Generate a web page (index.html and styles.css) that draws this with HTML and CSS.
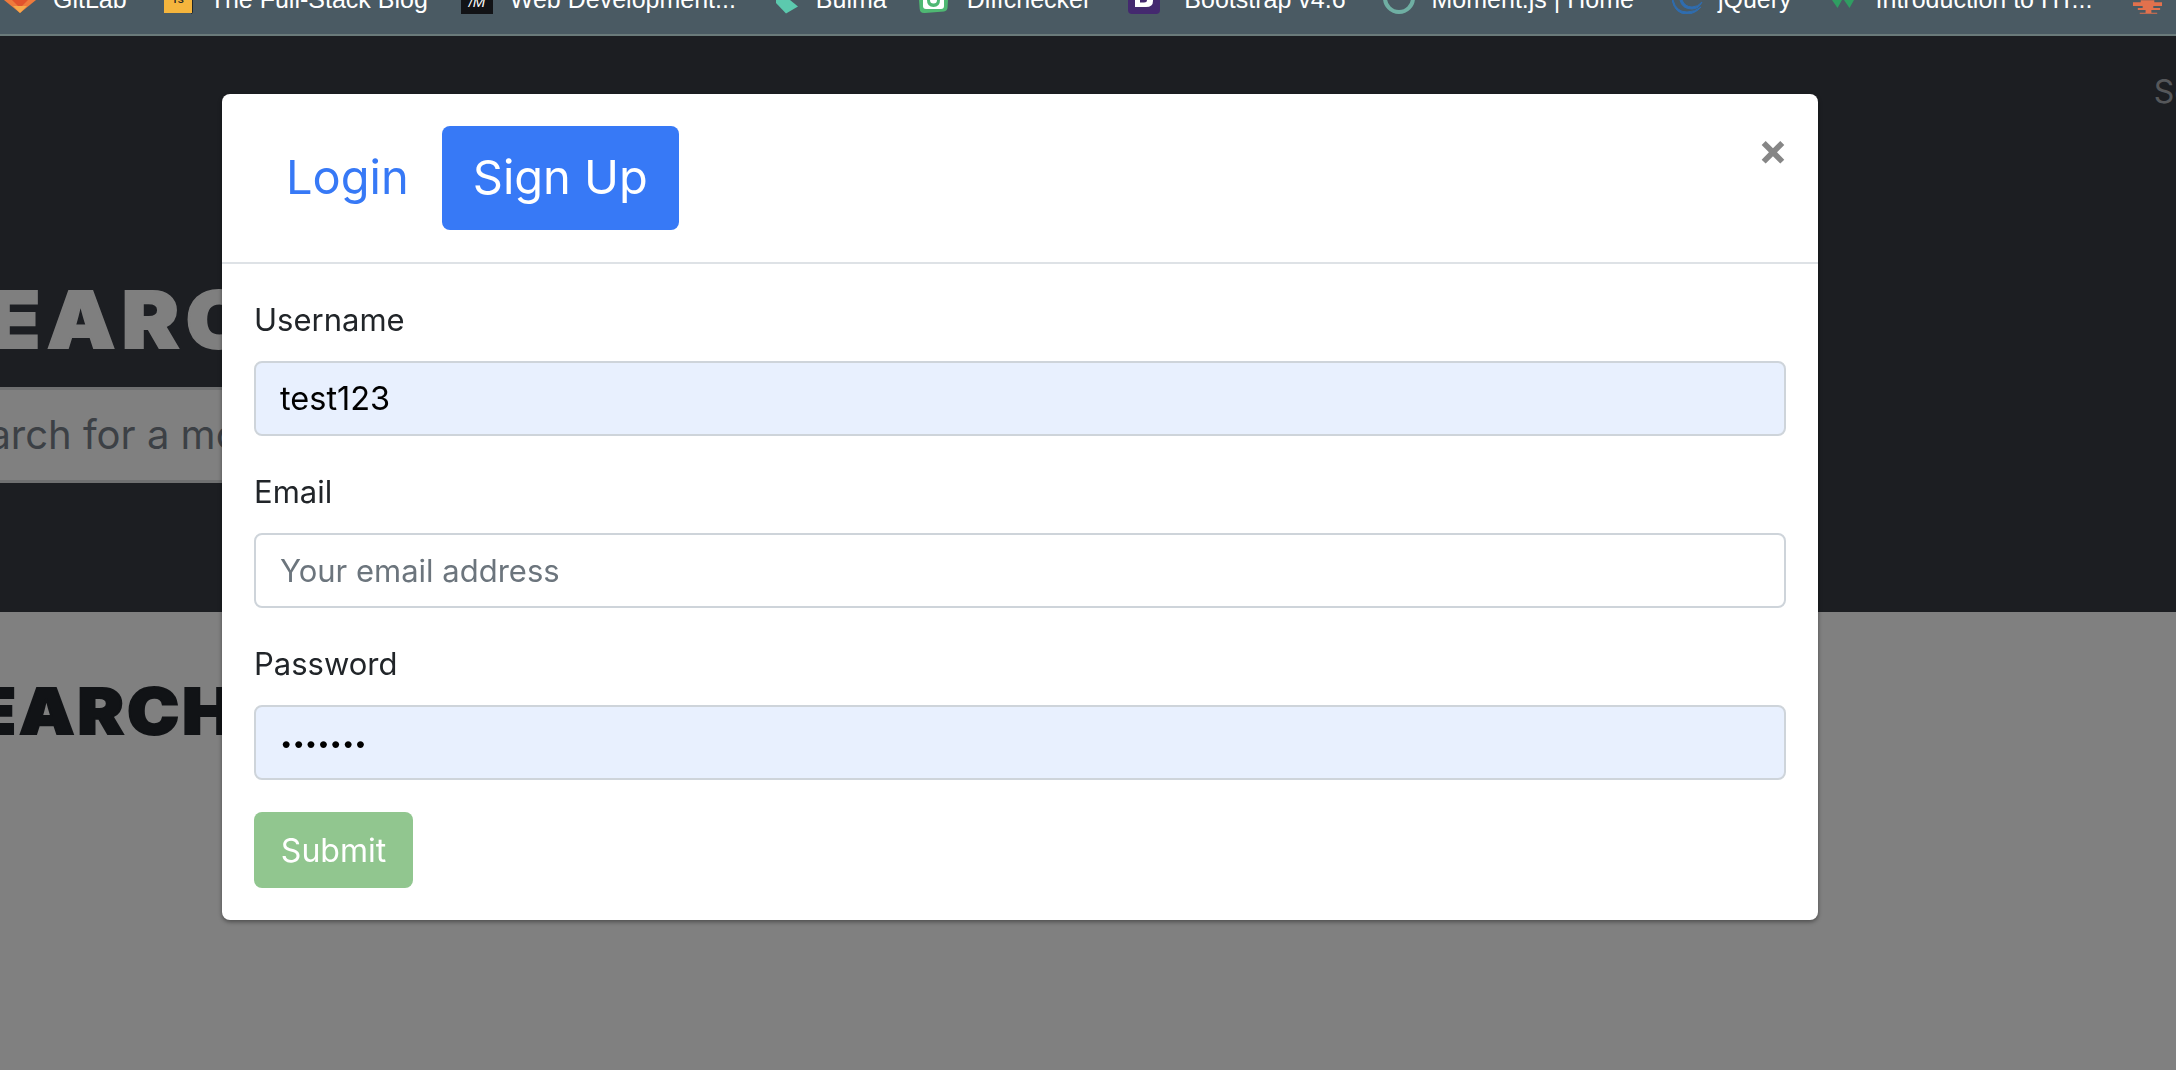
FILE: index.html

```html
<!DOCTYPE html>
<html lang="en">
<head>
  <meta charset="UTF-8" />
  <title>Search</title>
  <link rel="stylesheet" href="styles.css">
</head>
<body>
  <div class="bookmarks">
    <div class="mark mark-gitlab">
      <svg class="fav" viewBox="0 0 32 14"><path d="M0 0h32L16 13z" fill="#ef7a3c"/><path d="M8 0h16l-8 8z" fill="#e2532c"/><path d="M9 6h14l-7 7z" fill="#f7a84a"/></svg>
      <span>GitLab</span>
    </div>
    <div class="mark mark-blog">
      <svg class="fav fav-blog" viewBox="0 0 29 14"><path d="M28 0v12q0 1-1 1" stroke="#111" stroke-width="1.4" fill="none"/><rect width="28" height="13" fill="#f5b53d"/><text x="14" y="3" class="fav-ts">TS</text></svg>
      <span>The Full-Stack Blog</span>
    </div>
    <div class="mark mark-web">
      <svg class="fav" viewBox="0 0 32 14"><rect width="32" height="14" fill="#121316"/><text x="16" y="7" class="fav-m">/M</text></svg>
      <span>Web Development...</span>
    </div>
    <div class="mark mark-bulma">
      <svg class="fav fav-bulma" viewBox="0 0 22 14"><path d="M0 0v3l10 10.5L22 6.5 14 0z" fill="#5cc9ae"/></svg>
      <span>Bulma</span>
    </div>
    <div class="mark mark-diff">
      <svg class="fav fav-diff" viewBox="0 0 29 14"><path d="M0 0h29l-.5 8q-.3 3-3.5 3.4L6 13q-5 .5-5.300-4z" fill="#4fb873"/><path d="M4 0h21v6q0 3-3 3H7Q4 9 4 6z" fill="#fff"/><path d="M8 0h13q0 7-6.500 7T8 0z" fill="#4fb873"/><path d="M11 0h7q0 3.500-3.500 3.500T11 0z" fill="#fff"/></svg>
      <span>Diffchecker</span>
    </div>
    <div class="mark mark-boot">
      <svg class="fav" viewBox="0 0 32 14"><path d="M0 0h32v10q0 4-4 4H4q-4 0-4-4z" fill="#44296f"/><path d="M7 0h18v1q0 6-7 6H7z" fill="#fff"/><path d="M12 0h7q0 2.500-3 2.500h-4z" fill="#44296f"/></svg>
      <span>Bootstrap v4.6</span>
    </div>
    <div class="mark mark-moment">
      <svg class="fav" viewBox="0 0 32 14"><circle cx="16" cy="-2" r="14" stroke="#6fafa3" stroke-width="4" fill="none"/></svg>
      <span>Moment.js | Home</span>
    </div>
    <div class="mark mark-jq">
      <svg class="fav" viewBox="0 0 32 14"><path d="M1 0q3 12 14 12 8 0 14-5-6 7-14 7Q3 14 0 0z" fill="#2f6db0" stroke="#2f6db0"/><path d="M10 0q3 7 10 7 6 0 10-5-3 7-10 7-10 0-12-9z" fill="#2f6db0" stroke="#2f6db0"/></svg>
      <span>jQuery</span>
    </div>
    <div class="mark mark-intro">
      <svg class="fav fav-intro" viewBox="0 0 22 14"><path d="M0 0h10L5.500 8zM12 0h10l-4.500 8z" fill="#2f9e62"/></svg>
      <span>Introduction to HT...</span>
    </div>
    <div class="mark mark-last">
      <svg class="fav fav-last" viewBox="0 0 32 14"><path d="M9 0h14v2h8v4H22v2h7v2h-9v3h6v1H8v-1h6v-3H6V8h5V6H1V2h8z" fill="#e2714d"/></svg>
    </div>
  </div>

  <section class="hero">
    <div class="hero-side">Search</div>
    <h1 class="hero-title">SEARCH</h1>
    <div class="hero-input">Search for a movie</div>
  </section>

  <section class="results">
    <h2 class="results-title">SEARCH</h2>
  </section>

  <div class="backdrop">
    <div class="modal">
      <div class="modal-head">
        <nav class="tabs">
          <a class="tab">Login</a>
          <a class="tab tab-active">Sign Up</a>
        </nav>
        <span class="close">&times;</span>
      </div>
      <form class="modal-body">
        <div class="field">
          <label for="username">Username</label>
          <input class="input input-filled" id="username" type="text" value="test123">
        </div>
        <div class="field">
          <label for="email">Email</label>
          <input class="input" id="email" type="text" placeholder="Your email address">
        </div>
        <div class="field">
          <label for="password">Password</label>
          <input class="input input-filled input-pass" id="password" type="password" value="test123">
        </div>
        <button class="submit" type="button">Submit</button>
      </form>
    </div>
  </div>
</body>
</html>
```

FILE: styles.css

```css
* {
  box-sizing: border-box;
}
html, body {
  margin: 0;
  height: 100%;
  overflow: hidden;
}
body {
  font-family: Inter, "Noto Sans", sans-serif;
  background: #808080;
  color: #212529;
}

/* browser bookmarks strip, cut by the top of the shot */
.bookmarks {
  height: 36px;
  background: #4a5a63;
  border-bottom: 2px solid #6a7a7a;
  display: flex;
  align-items: flex-end;
  padding: 0 0 20px 4px;
  overflow: hidden;
  white-space: nowrap;
  color: #fff;
  font-family: "Liberation Sans", sans-serif;
  font-size: 25px;
  line-height: 30px;
}
.mark {
  display: flex;
  align-items: flex-end;
  gap: 17px;
  flex: none;
}
.fav {
  width: 32px;
  height: 14px;
  flex: none;
  display: block;
}
.fav-blog { width: 29px; }
.fav-bulma { width: 22px; }
.fav-diff { width: 29px; }
.fav-intro { width: 22px; }
.fav-last { width: 31px; }
.fav-ts {
  font: bold 9px "Liberation Sans", sans-serif;
  text-anchor: middle;
  fill: #222;
}
.fav-m {
  font: italic 15px "Liberation Sans", sans-serif;
  text-anchor: middle;
  fill: #fff;
}
.mark-blog { margin-left: 37px; }
.mark-web { margin-left: 33px; }
.mark-bulma { margin-left: 40px; gap: 18px; }
.mark-diff { margin-left: 32px; gap: 19px; }
.mark-boot { margin-left: 37px; gap: 24px; }
.mark-moment { margin-left: 37px; }
.mark-jq { margin-left: 38px; gap: 14px; }
.mark-intro { margin-left: 40px; gap: 22px; }
.mark-last { margin-left: 40px; }

/* page behind the modal */
.hero {
  height: 576px;
  background: #1c1e22;
  padding: 37px 0 0;
  overflow: hidden;
}
.hero-side {
  text-align: right;
  margin-right: -84px;
  font-size: 32px;
  line-height: 38px;
  color: #55575a;
}
.hero-title {
  margin: 161px 0 0 -76px;
  font-size: 78px;
  line-height: 96px;
  font-weight: 900;
  letter-spacing: 6px;
  white-space: nowrap;
  -webkit-text-stroke: 2px #7f7f7f;
  transform: scaleX(1.1);
  transform-origin: left;
  color: #7f7f7f;
}
.hero-input {
  width: 400px;
  height: 96px;
  margin: 19px 0 0 -90px;
  padding: 0 0 0 26px;
  background: #808080;
  border: 3px solid #6f7071;
  border-radius: 6px;
  font-size: 40px;
  line-height: 90px;
  white-space: nowrap;
  overflow: hidden;
  color: #3c4045;
}
.results {
  padding: 61px 0 0;
  overflow: hidden;
}
.results-title {
  margin: 0 0 0 -76px;
  font-size: 63px;
  line-height: 76px;
  font-weight: 900;
  letter-spacing: 3px;
  white-space: nowrap;
  -webkit-text-stroke: 2px #111316;
  transform: scaleX(1.1);
  transform-origin: left;
  color: #111316;
}

/* modal */
.backdrop {
  position: fixed;
  inset: 0;
  padding: 94px 358px 0 222px;
}
.modal {
  height: 826px;
  background: #fff;
  border-radius: 8px;
  box-shadow: 0 2px 4px rgba(0, 0, 0, 0.4);
}
.modal-head {
  height: 170px;
  border-bottom: 2px solid #dee2e6;
  display: flex;
  justify-content: space-between;
  align-items: flex-start;
  padding: 32px 32px 0;
}
.tabs {
  display: flex;
  gap: 1px;
}
.tab {
  height: 104px;
  padding: 0 32px;
  border-radius: 8px;
  font-size: 47px;
  line-height: 102px;
  color: #3779f6;
}
.tab-active {
  padding: 0 31px;
  background: #3779f6;
  color: #fff;
}
.close {
  width: 26px;
  height: 40px;
  margin-top: 3px;
  display: flex;
  align-items: center;
  justify-content: center;
  font-size: 44px;
  line-height: 40px;
  font-weight: 700;
  color: #868686;
}
.modal-body {
  padding: 32px 32px 0;
}
.field {
  margin-bottom: 32px;
}
.field label {
  display: block;
  padding-top: 1px;
  font-size: 31px;
  line-height: 46px;
  margin-bottom: 18px;
  color: #212529;
}
.input {
  display: block;
  width: 100%;
  height: 75px;
  padding: 0 24px;
  border: 2px solid #ced4da;
  border-radius: 8px;
  background: #fff;
  font-family: inherit;
  font-size: 31px;
  color: #000;
  outline: none;
}
.input::placeholder {
  color: #6c757d;
  opacity: 1;
}
.input-filled {
  background: #e8f0fe;
  font-size: 32.5px;
}
.input-pass {
  font-size: 22px;
}
.submit {
  display: block;
  width: 159px;
  height: 76px;
  padding: 0;
  border: 0;
  border-radius: 8px;
  background: #91c68f;
  color: #fff;
  font-family: inherit;
  font-size: 32px;
}
```
